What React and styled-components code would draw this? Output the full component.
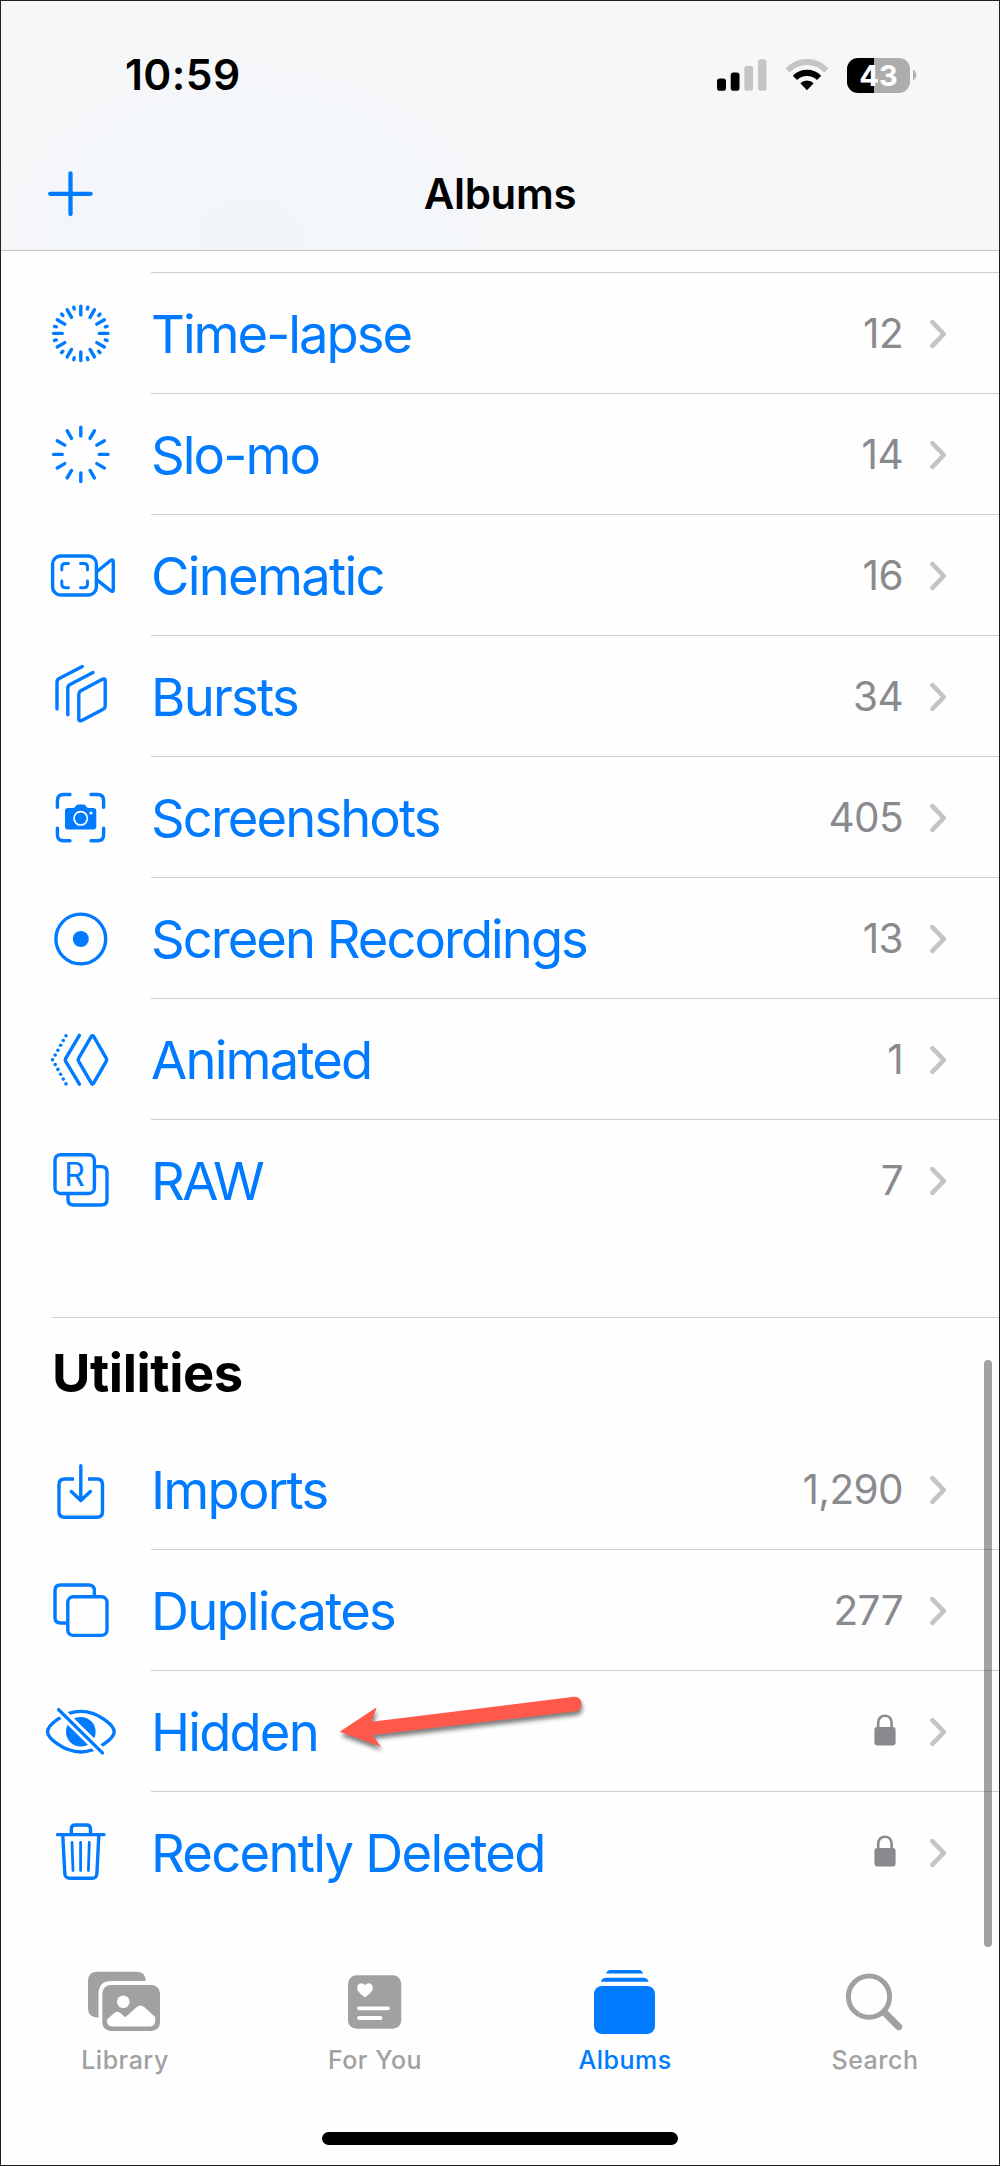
import React from 'react';
import styled, { createGlobalStyle } from 'styled-components';

const GlobalStyle = createGlobalStyle`
  * {
    box-sizing: border-box;
  }

  body {
    margin: 0;
    background: #fff;
    font-family: Inter, "Liberation Sans", sans-serif;
  }
`;

const Phone = styled.div`
  position: relative;
  width: 1000px;
  height: 2166px;
  overflow: hidden;
  background: #fefefe;
  display: flex;
  flex-direction: column;

  /* thin dark frame drawn over everything */
  &::after {
    content: '';
    position: absolute;
    inset: 0;
    border: 1px solid #231f20;
    pointer-events: none;
  }
`;

const Header = styled.header`
  height: 251px;
  flex: none;
  border-bottom: 1px solid #c4c4c6;
  background: radial-gradient(ellipse 330px 240px at 250px 240px, #f2f5fa 0%, #f3f6fa 50%, #f7f7f7 100%);
`;

const StatusBar = styled.div`
  height: 150px;
  padding: 0 83px 0 125px;
  display: flex;
  align-items: center;
  justify-content: space-between;
`;

const Clock = styled.span`
  font-size: 42.5px;
  font-weight: 600;
  letter-spacing: ${({ $tracking }) => $tracking}px;
  line-height: 50px;
`;

const StatusIcons = styled.div`
  display: flex;
  align-items: center;
`;

const WifiIcon = styled.svg`
  margin-left: 18px;
`;

const Battery = styled.div`
  width: 63px;
  height: 35px;
  margin-left: 18px;
  border-radius: 11px;
  background: linear-gradient(to right, #000 27px, #adadad 27px);
  color: #fff;
  font-size: 29px;
  font-weight: 700;
  line-height: 36px;
  text-align: center;
`;

const NavBar = styled.div`
  height: 87px;
  padding: 0 48px;
  display: grid;
  grid-template-columns: 1fr auto 1fr;
  align-items: center;
`;

const NavTitle = styled.h1`
  margin: 0;
  font-size: 42px;
  font-weight: 600;
  letter-spacing: ${({ $tracking }) => $tracking}px;
`;

const AddButton = styled.button`
  width: 46px;
  height: 46px;
  padding: 0;
  border: none;
  background: none;
  cursor: pointer;

  svg {
    display: block;
  }
`;

const TypeList = styled.section`
  padding-top: 21px;

  &::before {
    content: '';
    display: block;
    margin-left: 151px;
    height: 1px;
    background: #cecece;
  }
`;

const Row = styled.div`
  position: relative;
  height: 121px;
  display: flex;
`;

const RowIcon = styled.div`
  width: 151px;
  padding-left: 43px;
  padding-bottom: 1px;
  display: flex;
  align-items: center;
`;

const RowBody = styled.div`
  flex: 1;
  padding: 1px 53px 0 0;
  display: flex;
  align-items: center;
  border-bottom: 1px solid ${({ $last }) => ($last ? 'transparent' : '#cecece')};
`;

const RowLabel = styled.span`
  flex: 1;
  color: #007aff;
  font-size: 52.5px;
  letter-spacing: ${({ $tracking }) => $tracking}px;
  white-space: nowrap;
`;

const RowCount = styled.span`
  margin-right: 25px;
  color: #8a8a8e;
  font-size: 40.5px;
  letter-spacing: -0.6px;
`;

const LockHolder = styled.span`
  margin: 0 32px 4px 0;
  display: flex;
`;

const Utilities = styled.section`
  margin-top: 76px;
`;

const SectionTitle = styled.h2`
  margin: 0 0 0 52px;
  height: 112px;
  border-top: 1px solid #d2d2d2;
  font-size: 52.5px;
  font-weight: 700;
  line-height: 111px;
  letter-spacing: ${({ $tracking }) => $tracking}px;
`;

const Pointer = styled.svg`
  position: absolute;
  left: 330px;
  top: 15px;
  filter: drop-shadow(1px 4px 2px rgba(0, 0, 0, 0.5));
`;

const ScrollThumb = styled.div`
  position: absolute;
  left: 984px;
  top: 1360px;
  width: 8px;
  height: 587px;
  border-radius: 4px;
  background: rgba(0, 0, 0, 0.36);
`;

const TabBar = styled.nav`
  padding-top: 53px;
  display: grid;
  grid-template-columns: repeat(4, 1fr);
`;

const Tab = styled.a`
  display: flex;
  flex-direction: column;
  align-items: center;
  color: ${({ $active }) => ($active ? '#007aff' : '#a1a1a1')};
`;

const TabLabel = styled.span`
  margin-top: 9px;
  font-size: 25px;
  font-weight: 500;
  line-height: 30px;
  letter-spacing: ${({ $tracking }) => $tracking}px;
`;

const HomeIndicator = styled.div`
  width: 356px;
  height: 13px;
  margin: 57px auto 0;
  border-radius: 7px;
  background: #000;
`;

const Glyph = ({ children }) => (
  <svg
    width="76"
    height="76"
    viewBox="0 0 76 76"
    fill="none"
    stroke="#007aff"
    strokeWidth="3.4"
    strokeLinecap="round"
    strokeLinejoin="round"
  >
    {children}
  </svg>
);

const spokes = (count, offset, inner, outer) =>
  Array.from({ length: count }, (_, i) => (
    <line
      key={`${offset}-${i}`}
      x1="37.8"
      x2="37.8"
      y1={38.4 - inner}
      y2={38.4 - outer}
      transform={`rotate(${offset + (360 / count) * i} 37.8 38.4)`}
    />
  ));

const TimeLapseIcon = () => (
  <Glyph>
    {spokes(12, 0, 18.5, 27.2)}
    {spokes(12, 15, 25.3, 27.2)}
  </Glyph>
);

const SloMoIcon = () => <Glyph>{spokes(12, 0, 18.5, 27.2)}</Glyph>;

const CinematicIcon = () => (
  <Glyph>
    <rect x="9.6" y="19" width="43.8" height="39" rx="8" />
    <path d="M54 34.5 67.2 23.8Q70.3 21.6 70.3 25V52.3Q70.3 55.7 67.2 53.4L54 42.8" />
    <path
      strokeWidth="2.9"
      d="M18.8 33V30Q18.8 26.5 22.3 26.5H25.5M37.5 26.5H41Q44.5 26.5 44.5 30V33M44.5 44V47.3Q44.5 50.7 41 50.7H37.5M25.5 50.7H22.3Q18.8 50.7 18.8 47.3V44"
    />
  </Glyph>
);

const BurstsIcon = () => (
  <Glyph>
    <path d="M14 50.9V24Q14 21.6 16.2 20.4L39.3 8.6" />
    <path d="M24.8 56.8V30Q24.8 27.6 27 26.4L50 14.6" />
    <path d="M35.8 36.3Q35.8 34 37.8 32.8L59.4 21.3Q62.2 20 62.2 22.8V48Q62.2 50 60.2 51.2L38.7 62.4Q35.8 63.8 35.8 61Z" />
  </Glyph>
);

const ScreenshotsIcon = () => (
  <Glyph>
    <path d="M14.4 28.3V21.5Q14.4 15.5 20.4 15.5H27M48 15.5H54.6Q60.6 15.5 60.6 21.5V28.3M60.6 49.3V55.8Q60.6 61.8 54.6 61.8H48M27 61.8H20.4Q14.4 61.8 14.4 55.8V49.3" />
    <path
      fill="#007aff"
      stroke="none"
      d="M25 29H30Q31.5 29 32.3 27.8L32.9 26.8Q33.8 25.4 35.5 25.4H40.2Q42 25.4 42.8 26.8L43.4 27.8Q44.2 29 45.6 29H50.3Q53.3 29 53.3 32V47.4Q53.3 50.4 50.3 50.4H25Q22 50.4 22 47.4V32Q22 29 25 29Z"
    />
    <circle cx="37.7" cy="39.3" r="6.7" stroke="#fff" strokeWidth="1.7" />
    <circle cx="48" cy="34" r="1.6" fill="#fff" stroke="none" />
  </Glyph>
);

const RecordingsIcon = () => (
  <Glyph>
    <circle cx="37.8" cy="39" r="24.9" />
    <circle cx="37.8" cy="39" r="8" fill="#007aff" stroke="none" />
  </Glyph>
);

const dots = [
  [23, 14.7], [20.3, 19.5], [17.6, 24.3], [14.9, 29.2], [12.2, 34],
  [9.5, 38.8],
  [12.2, 43.6], [14.9, 48.4], [17.6, 53.3], [20.3, 58.1], [23, 62.9],
];

const AnimatedIcon = () => (
  <Glyph>
    {dots.map(([x, y]) => (
      <circle key={y} cx={x} cy={y} r="1.8" fill="#007aff" stroke="none" />
    ))}
    <path d="M36.4 14.4 22.7 37.3Q21.8 38.8 22.7 40.3L36.4 63.2" />
    <path d="M48.5 15.2Q49.5 13.6 50.5 15.2L63.2 37.2Q64.2 38.8 63.2 40.4L50.5 62.4Q49.5 64 48.5 62.4L35.7 40.4Q34.7 38.8 35.7 37.2Z" />
  </Glyph>
);

const RawIcon = () => (
  <Glyph>
    <rect x="12" y="12.7" width="39.4" height="38.8" rx="5.5" />
    <path d="M52 24.6H58.5Q64 24.6 64 30V57.5Q64 63 58.5 63H30.5Q25 63 25 57.5V52" />
    <text
      x="31.6"
      y="43.8"
      textAnchor="middle"
      fontSize="32"
      fontWeight="400"
      fill="#007aff"
      stroke="none"
    >
      R
    </text>
  </Glyph>
);

const ImportsIcon = () => (
  <Glyph>
    <path strokeLinecap="butt" d="M31 28H21.5Q16 28 16 33.5V60.8Q16 66.3 21.5 66.3H54Q59.5 66.3 59.5 60.8V33.5Q59.5 28 54 28H45" />
    <path d="M37.8 14.7V49.3M28.3 40.5 37.8 49.5 47.4 40.5" />
  </Glyph>
);

const DuplicatesIcon = () => (
  <Glyph>
    <rect x="24.8" y="24.8" width="39.2" height="38.6" rx="5.5" />
    <path strokeLinecap="butt" d="M51.4 24V18.6Q51.4 13 45.9 13H17.5Q12 13 12 18.6V45.5Q12 51 17.5 51H24" />
  </Glyph>
);

const HiddenIcon = () => (
  <Glyph>
    <path d="M4.5 38.7C4.5 33 20 18.4 37.8 18.4S71.2 33 71.2 38.7 55.6 59 37.8 59 4.5 44.4 4.5 38.7Z" />
    <circle cx="37.8" cy="38.7" r="14.8" fill="#007aff" stroke="none" />
    <path stroke="#fefefe" strokeWidth="9" strokeLinecap="butt" d="M14 15 61 61.3" />
    <path d="M15.6 16.6 59.4 59.9" />
  </Glyph>
);

const TrashIcon = () => (
  <Glyph>
    <path strokeWidth="3.2" d="M14.5 20.7H61" />
    <path d="M28.3 20V15Q28.3 11 32.3 11H43.5Q47.5 11 47.5 15V20" />
    <path d="M19.8 21.5 21.8 59.5Q22.1 64.3 27 64.3H49Q53.6 64.3 53.9 59.5L55.8 21.5" />
    <path strokeWidth="2.8" d="M29 28.5 30 56.5M37.6 28.5V56.5M46.3 28.5 45.4 56.5" />
  </Glyph>
);

const Chevron = () => (
  <svg width="19" height="30" viewBox="0 0 19 30" fill="none">
    <path d="M4.4 3.2 15.8 15 4.4 26.8" stroke="#c4c4c6" strokeWidth="4.6" strokeLinecap="round" strokeLinejoin="round" />
  </svg>
);

const Lock = () => (
  <LockHolder>
    <svg width="22" height="32" viewBox="0 0 22 32">
      <path d="M4.2 15V8.6C4.2 -0.6 17.6 -0.6 17.6 8.6V15" fill="none" stroke="#8a8a8e" strokeWidth="2.6" />
      <rect x="0.4" y="13" width="21.2" height="18.5" rx="3" fill="#8a8a8e" />
    </svg>
  </LockHolder>
);

const LibraryIcon = () => (
  <svg width="80" height="70" viewBox="0 0 80 70" fill="#a1a1a1">
    <path d="M12.5 5.7H51.5Q60.6 5.7 60.6 15H26.5Q13.5 15 13.5 28V51.7Q3 51.7 3 42.5V15Q3 5.7 12.5 5.7Z" />
    <rect x="17.3" y="19" width="57.7" height="46" rx="8.5" />
    <circle cx="38.3" cy="35.7" r="6.3" fill="#fff" />
    <path d="M22 53.5 29.5 46.8Q32.3 44.8 35 46.8L40.3 51.3 51.5 41.2Q55.5 38 59.5 41.2L70.2 51V55Q70.2 60.4 65 60.4H27Q22 60.4 22 55Z" fill="#fff" />
  </svg>
);

const ForYouIcon = () => (
  <svg width="80" height="70" viewBox="0 0 80 70">
    <rect x="13" y="9.2" width="53.3" height="53.5" rx="8.5" fill="#a1a1a1" />
    <path d="M30 31.5C26 28.6 22.2 25.4 22.2 21.8 22.2 16.8 28 15.8 30 19.6 32 15.8 37.8 16.8 37.8 21.8 37.8 25.4 34 28.6 30 31.5Z" fill="#fff" />
    <path d="M24 42.3H53M24 52H45.5" stroke="#fff" strokeWidth="3.8" strokeLinecap="round" />
  </svg>
);

const AlbumsIcon = () => (
  <svg width="80" height="70" viewBox="0 0 80 70" fill="#007aff">
    <path d="M21.2 7.6Q22 4 25.5 4H54Q57.3 4 58 7.6Z" />
    <path d="M15.7 15.7Q17.2 11.7 21 11.7H58.5Q62.3 11.7 63.7 15.7Z" />
    <rect x="9" y="20" width="61" height="48" rx="8" />
  </svg>
);

const SearchIcon = () => (
  <svg width="80" height="70" viewBox="0 0 80 70" fill="none" stroke="#a1a1a1">
    <circle cx="34" cy="30.7" r="20.6" strokeWidth="5" />
    <path d="M49.5 46.5 63.7 60.8" strokeWidth="7" strokeLinecap="round" />
  </svg>
);

const mediaTypes = [
  { label: 'Time-lapse', count: '12', icon: TimeLapseIcon, tracking: -2 },
  { label: 'Slo-mo', count: '14', icon: SloMoIcon, tracking: -1.9 },
  { label: 'Cinematic', count: '16', icon: CinematicIcon, tracking: -1.7 },
  { label: 'Bursts', count: '34', icon: BurstsIcon, tracking: -1.7 },
  { label: 'Screenshots', count: '405', icon: ScreenshotsIcon, tracking: -1.9 },
  { label: 'Screen Recordings', count: '13', icon: RecordingsIcon, tracking: -1.97 },
  { label: 'Animated', count: '1', icon: AnimatedIcon, tracking: -1.8 },
  { label: 'RAW', count: '7', icon: RawIcon, tracking: -2.5 },
];

const utilities = [
  { label: 'Imports', count: '1,290', icon: ImportsIcon, tracking: -1.75 },
  { label: 'Duplicates', count: '277', icon: DuplicatesIcon, tracking: -1.75 },
  { label: 'Hidden', locked: true, icon: HiddenIcon, tracking: -1.8, pointed: true },
  { label: 'Recently Deleted', locked: true, icon: TrashIcon, tracking: -1.7 },
];

const tabs = [
  { label: 'Library', icon: LibraryIcon, tracking: 0.5 },
  { label: 'For You', icon: ForYouIcon, tracking: 0.5 },
  { label: 'Albums', icon: AlbumsIcon, tracking: 0.5, active: true },
  { label: 'Search', icon: SearchIcon, tracking: 0.5 },
];

const AlbumRow = ({ item, last }) => {
  const Icon = item.icon;
  return (
    <Row>
      <RowIcon><Icon /></RowIcon>
      <RowBody $last={last}>
        <RowLabel $tracking={item.tracking}>{item.label}</RowLabel>
        {item.locked ? <Lock /> : <RowCount>{item.count}</RowCount>}
        <Chevron />
      </RowBody>
      {item.pointed && (
        <Pointer width="264" height="80" viewBox="0 0 264 80">
          <path
            d="M9.7 45.7 46.7 21.3 41.7 35.7 244 10.8Q251 10.6 251.5 17.5 251.8 23.6 246 25.3L42.3 49 51 60.7Z"
            fill="#ff594c"
          />
        </Pointer>
      )}
    </Row>
  );
};

const App = () => (
  <>
    <GlobalStyle />
    <Phone>
      <Header>
        <StatusBar>
          <Clock $tracking={0.4}>10:59</Clock>
          <StatusIcons>
            <svg width="50" height="34" viewBox="0 0 50 34">
              <rect x="0" y="20.5" width="9" height="12.2" rx="2.8" />
              <rect x="13.7" y="14.5" width="8.8" height="18.2" rx="2.8" />
              <rect x="27.3" y="7.8" width="8.8" height="24.9" rx="2.8" fill="#c5c5c5" />
              <rect x="41" y="1.2" width="8.5" height="31.5" rx="2.8" fill="#c5c5c5" />
            </svg>
            <WifiIcon width="44" height="34" viewBox="0 0 44 34">
              <path d="M0.6 10.3Q9.5 1 22 1T43.4 10.3L39.3 14.4Q32 7 22 7T4.7 14.4Z" fill="#c5c5c5" />
              <path d="M7.8 17.7Q13.8 11.8 22 11.8T36.2 17.7L32 22Q27.8 18 22 18T12 22Z" />
              <path d="M15.3 25.3Q18 22.5 22 22.5T28.7 25.3L22 32.3Z" />
            </WifiIcon>
            <Battery>43</Battery>
            <svg width="7" height="12" viewBox="0 0 7 12">
              <path d="M3 0.5Q6.3 2.5 6.3 6T3 11.5Z" fill="#b5b5b5" />
            </svg>
          </StatusIcons>
        </StatusBar>
        <NavBar>
          <AddButton aria-label="Add">
            <svg width="46" height="46" viewBox="0 0 46 46">
              <path d="M22.5 2.4V43M2.2 22.8H42.6" stroke="#007aff" strokeWidth="4.3" strokeLinecap="round" />
            </svg>
          </AddButton>
          <NavTitle $tracking={-0.3}>Albums</NavTitle>
        </NavBar>
      </Header>
      <TypeList>
        {mediaTypes.map((item, i) => (
          <AlbumRow key={item.label} item={item} last={i === mediaTypes.length - 1} />
        ))}
      </TypeList>
      <Utilities>
        <SectionTitle $tracking={-0.4}>Utilities</SectionTitle>
        {utilities.map((item, i) => (
          <AlbumRow key={item.label} item={item} last={i === utilities.length - 1} />
        ))}
      </Utilities>
      <TabBar>
        {tabs.map(({ label, icon: Icon, tracking, active }) => (
          <Tab key={label} $active={active}>
            <Icon />
            <TabLabel $tracking={tracking}>{label}</TabLabel>
          </Tab>
        ))}
      </TabBar>
      <HomeIndicator />
      <ScrollThumb />
    </Phone>
  </>
);

export default App;
